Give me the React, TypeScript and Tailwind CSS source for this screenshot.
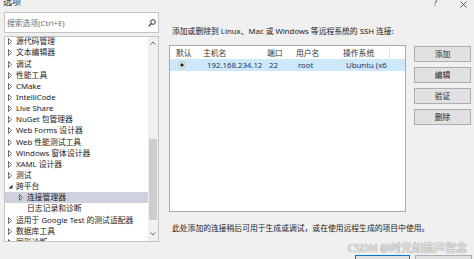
import { FC } from "react";

type Item = { t: string; lvl: number; icon: "c" | "e" | "n"; sel?: boolean };

const treeItems: Item[] = [
  { t: "源代码管理", lvl: 0, icon: "c" },
  { t: "文本编辑器", lvl: 0, icon: "c" },
  { t: "调试", lvl: 0, icon: "c" },
  { t: "性能工具", lvl: 0, icon: "c" },
  { t: "CMake", lvl: 0, icon: "c" },
  { t: "IntelliCode", lvl: 0, icon: "c" },
  { t: "Live Share", lvl: 0, icon: "c" },
  { t: "NuGet 包管理器", lvl: 0, icon: "c" },
  { t: "Web Forms 设计器", lvl: 0, icon: "c" },
  { t: "Web 性能测试工具", lvl: 0, icon: "c" },
  { t: "Windows 窗体设计器", lvl: 0, icon: "c" },
  { t: "XAML 设计器", lvl: 0, icon: "c" },
  { t: "测试", lvl: 0, icon: "c" },
  { t: "跨平台", lvl: 0, icon: "e" },
  { t: "连接管理器", lvl: 1, icon: "c", sel: true },
  { t: "日志记录和诊断", lvl: 1, icon: "n" },
  { t: "适用于 Google Test 的测试适配器", lvl: 0, icon: "c" },
  { t: "数据库工具", lvl: 0, icon: "c" },
  { t: "图形诊断", lvl: 0, icon: "c" },
];

const Arrow: FC<{ kind: Item["icon"] }> = ({ kind }) => {
  if (kind === "c")
    return (
      <svg width="4" height="7" viewBox="0 0 4 7">
        <polygon points="0.5,0.5 3.5,3.5 0.5,6.5" fill="none" stroke="#5a5a5a" strokeWidth="0.9" />
      </svg>
    );
  if (kind === "e")
    return (
      <svg width="5" height="5" viewBox="0 0 5 5">
        <polygon points="4.5,0.5 4.5,4.5 0.5,4.5" fill="#333" />
      </svg>
    );
  return <span className="w-[4px]" />;
};

const Btn: FC<{ label: string }> = ({ label }) => (
  <div className="flex h-[16px] items-center justify-center border border-[#adadad] bg-[#e1e1e1] text-[#222]">
    {label}
  </div>
);

const cols = "grid grid-cols-[27px_64px_29px_47px_47px] pl-[6px]";

export default function App() {
  return (
    <div className="relative h-[259px] w-[474px] overflow-hidden bg-[#f0f0f0] font-['Noto_Sans','Noto_Sans_CJK_SC',sans-serif] text-[7.8px] leading-[10px] text-[#1b1b1b]">
      {/* title bar */}
      <div className="flex h-[12px] items-start">
        <span className="-mt-[3px] ml-[3px] text-[9px] leading-[9px]">选项</span>
        <span className="ml-auto mt-[-1px] text-[8px] leading-[8px] text-[#444]">?</span>
        <svg className="ml-[23px] mr-[7px] mt-[1px]" width="7" height="7" viewBox="0 0 7 7">
          <path d="M0.5 0.5 L6.5 6.5 M6.5 0.5 L0.5 6.5" stroke="#333" strokeWidth="0.8" />
        </svg>
      </div>

      <div className="flex">
        {/* left column */}
        <div className="ml-[4px] flex w-[155px] flex-col">
          <div className="flex h-[21px] items-center border border-[#c4c4c4] bg-white pl-[2px] pr-[2px]">
            <span className="mt-[1px] text-[#6d6d6d]">搜索选项(Ctrl+E)</span>
            <svg className="ml-auto" width="8" height="8" viewBox="0 0 8 8">
              <circle cx="5" cy="3" r="2.3" fill="none" stroke="#333" strokeWidth="1" />
              <path d="M3.3 4.7 L0.6 7.4" stroke="#333" strokeWidth="1.2" />
            </svg>
          </div>
          <div className="mt-[3px] flex h-[206px] overflow-hidden border border-[#c4c4c4] bg-white">
            <div className="-mt-[0.8px] flex-1">
              {treeItems.map((it) => (
                <div
                  key={it.t}
                  className={`flex h-[11.15px] items-center ${it.sel ? "bg-[#cfd1df]" : ""}`}
                  style={{ paddingLeft: 3 + it.lvl * 11 }}
                >
                  <span className="flex w-[5px] items-center">
                    <Arrow kind={it.icon} />
                  </span>
                  <span className="ml-[3px] whitespace-nowrap leading-[11px]">{it.t}</span>
                </div>
              ))}
            </div>
            {/* scrollbar */}
            <div className="flex w-[10px] flex-col bg-[#f0f0f0]">
              <div className="flex h-[8px] items-end justify-center">
                <svg width="6" height="4" viewBox="0 0 6 4">
                  <path d="M0.5 3.5 L3 1 L5.5 3.5" fill="none" stroke="#555" strokeWidth="0.9" />
                </svg>
              </div>
              <div className="flex-1">
                <div className="mx-[1px] mt-[94px] h-[81px] bg-[#cdcdcd]" />
              </div>
              <div className="flex h-[9px] items-start justify-center">
                <svg width="6" height="4" viewBox="0 0 6 4">
                  <path d="M0.5 0.5 L3 3 L5.5 0.5" fill="none" stroke="#555" strokeWidth="0.9" />
                </svg>
              </div>
            </div>
          </div>
        </div>

        {/* right column */}
        <div className="ml-[10px] flex flex-col">
          <div className="mt-[14px] ml-[3px] whitespace-nowrap">
            添加或删除到 Linux、Mac 或 Windows 等远程系统的 SSH 连接:
          </div>
          <div className="mt-[9px] flex">
            <div className="h-[167px] w-[237px] border border-[#a9a9a9] bg-white">
              <div className={`${cols} h-[13px] items-center text-[#333]`}>
                <span>默认</span>
                <span>主机名</span>
                <span>端口</span>
                <span>用户名</span>
                <span className="h-[12px] border-r border-[#e0e0e0] leading-[12px]">操作系统</span>
              </div>
              <div className={`${cols} h-[12px] items-center bg-[#cde8fb] text-[#1f3563]`}>
                <span className="flex items-center pl-[2px]">
                  <svg width="8" height="8" viewBox="0 0 8 8">
                    <circle cx="4" cy="4" r="3.4" fill="#fff" stroke="#8a8a8a" strokeWidth="0.6" />
                    <circle cx="4" cy="4" r="1.7" fill="#222" />
                  </svg>
                </span>
                <span className="pl-[4px]">192.168.234.12</span>
                <span className="pl-[2px]">22</span>
                <span className="pl-[2px]">root</span>
                <span className="w-[44px] overflow-hidden whitespace-nowrap pl-[3px]">Ubuntu (x64)</span>
              </div>
            </div>
            <div className="ml-[8px] mt-[1px] flex w-[57px] flex-col gap-[5px]">
              <Btn label="添加" />
              <Btn label="编辑" />
              <Btn label="验证" />
              <Btn label="删除" />
            </div>
          </div>
          <div className="ml-[3px] mt-[11px] whitespace-nowrap">
            此处添加的连接稍后可用于生成或调试，或在使用远程生成的项目中使用。
          </div>
        </div>
      </div>

      {/* bottom buttons */}
      <div className="mt-[13px] flex justify-end gap-[5px] pr-[2px]">
        <div className="h-[20px] w-[55px] border border-[#0078d7] bg-[#e1e1e1]" />
        <div className="h-[20px] w-[57px] border border-[#adadad] bg-[#e1e1e1]" />
      </div>

      <div className="absolute right-[7px] top-[241px] whitespace-nowrap text-[11px] leading-[14px] text-[#ececec] [text-shadow:0_0_1px_#8c8c8c,0_0_1px_#8c8c8c]">
        CSDN @时光如箭声留念
      </div>
    </div>
  );
}
